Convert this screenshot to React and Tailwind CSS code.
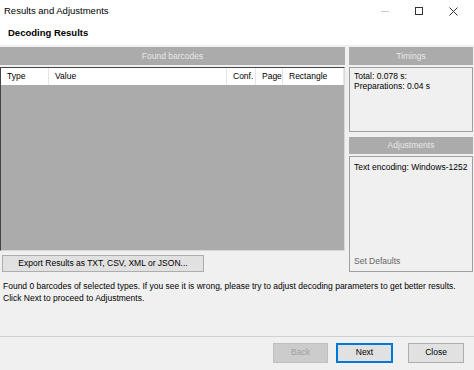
export default function App() {
  const cols = [
    { label: 'Type', w: 'w-[48px]' },
    { label: 'Value', w: 'w-[178px]' },
    { label: 'Conf.', w: 'w-[29px]' },
    { label: 'Page', w: 'w-[27px]' },
    { label: 'Rectangle', w: 'flex-1' },
  ];

  return (
    <div className="w-[474px] h-[370px] bg-[#f0f0f0] flex flex-col overflow-hidden text-[8.5px] text-black whitespace-nowrap" style={{ fontFamily: '"Liberation Sans", Arial, sans-serif' }}>
      {/* title bar + header */}
      <div className="bg-white h-[45px] flex flex-col">
        <div className="h-[22px] flex items-center pl-[4px]">
          <span className="flex-1 text-[9.5px]">Results and Adjustments</span>
          <div className="flex items-center h-full pr-[4px]">
            <div className="w-[34px] flex justify-center">
              <div className="w-[8px] h-px bg-[#c8c8c8]" />
            </div>
            <div className="w-[34px] flex justify-center">
              <div className="w-[8px] h-[8px] border border-[#333]" />
            </div>
            <div className="w-[34px] flex justify-center">
              <svg width="9" height="9" viewBox="0 0 9 9"><path d="M0.5 0.5 L8.5 8.5 M8.5 0.5 L0.5 8.5" stroke="#333" strokeWidth="1" /></svg>
            </div>
          </div>
        </div>
        <div className="pl-[8px] pt-[4px] font-bold text-[9.5px]">Decoding Results</div>
      </div>

      <div className="flex gap-[4px] pt-[2px] pr-[1px]">
        {/* left column */}
        <div className="w-[345px] flex flex-col">
          <div className="h-[18px] bg-[#ababab] text-[#e8e8e8] flex items-center justify-center">Found barcodes</div>
          <div className="mt-[2px] h-[184px] border border-[#444] border-r-[#d8d8d8] border-b-[#d8d8d8] bg-[#ababab] flex flex-col">
            <div className="h-[17px] bg-white flex">
              {cols.map(c => (
                <div key={c.label} className={`${c.w} border-r border-[#e5e5e5] pl-[6px] flex items-center`}>{c.label}</div>
              ))}
            </div>
          </div>
          <div className="mt-[4px] pl-[2px]">
            <div className="w-[202px] h-[17px] bg-[#e1e1e1] border border-[#adadad] flex items-center justify-center">Export Results as TXT, CSV, XML or JSON...</div>
          </div>
        </div>

        {/* right column */}
        <div className="flex-1 flex flex-col">
          <div className="h-[18px] bg-[#ababab] text-[#e8e8e8] flex items-center justify-center">Timings</div>
          <div className="mt-[2px] h-[65px] border border-[#a0a0a0] px-[4px] pt-[3px] leading-[10px]">
            <div>Total: 0.078 s:</div>
            <div>Preparations: 0.04 s</div>
          </div>
          <div className="mt-[5px] h-[17px] bg-[#ababab] text-[#e8e8e8] flex items-center justify-center">Adjustments</div>
          <div className="mt-[2px] h-[116px] border border-[#a0a0a0] px-[4px] pt-[4px] flex flex-col">
            <div className="flex-1">Text encoding: Windows-1252</div>
            <div className="text-[#666] pb-[3px]">Set Defaults</div>
          </div>
        </div>
      </div>

      <div className="pl-[3px] pt-[8px] leading-[12px]">
        <div>Found 0 barcodes of selected types. If you see it is wrong, please try to adjust decoding parameters to get better results.</div>
        <div>Click Next to proceed to Adjustments.</div>
      </div>

      <div className="mt-auto border-t border-[#d0d0d0] h-[34px] flex items-center justify-end pr-[10px] pb-[2px]">
        <div className="w-[55px] h-[20px] bg-[#cccccc] border border-[#bfbfbf] text-[#a0a0a0] flex items-center justify-center">Back</div>
        <div className="ml-[8px] w-[57px] h-[20px] bg-[#e1e1e1] border-2 border-[#0078d7] flex items-center justify-center">Next</div>
        <div className="ml-[15px] w-[56px] h-[20px] bg-[#e1e1e1] border border-[#adadad] flex items-center justify-center">Close</div>
      </div>
    </div>
  );
}
